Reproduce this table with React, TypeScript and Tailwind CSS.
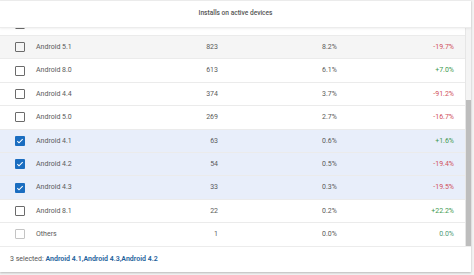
import React from "react";

type Row = { name: string; installs: string; pct: string; change: string; tone: "red" | "green" | "gray"; checked?: boolean; hover?: boolean; disabled?: boolean; hidden?: boolean };

const rows: Row[] = [
  { name: "", installs: "", pct: "", change: "", tone: "red", hidden: true },
  { name: "Android 5.1", installs: "823", pct: "8.2%", change: "-19.7%", tone: "red", hover: true },
  { name: "Android 8.0", installs: "613", pct: "6.1%", change: "+7.0%", tone: "green" },
  { name: "Android 4.4", installs: "374", pct: "3.7%", change: "-91.2%", tone: "red" },
  { name: "Android 5.0", installs: "269", pct: "2.7%", change: "-16.7%", tone: "red" },
  { name: "Android 4.1", installs: "63", pct: "0.6%", change: "+1.6%", tone: "green", checked: true },
  { name: "Android 4.2", installs: "54", pct: "0.5%", change: "-19.4%", tone: "red", checked: true },
  { name: "Android 4.3", installs: "33", pct: "0.3%", change: "-19.5%", tone: "red", checked: true },
  { name: "Android 8.1", installs: "22", pct: "0.2%", change: "+22.2%", tone: "green" },
  { name: "Others", installs: "1", pct: "0.0%", change: "0.0%", tone: "gray", disabled: true },
];

function Box({ checked, disabled }: { checked?: boolean; disabled?: boolean }) {
  if (checked) {
    return (
      <div className="w-[10px] h-[10px] rounded-[1px] bg-[#1a6dc0] flex items-center justify-center">
        <svg width="8" height="8" viewBox="0 0 24 24">
          <path d="M4 12.5l5 5L20 6.5" fill="none" stroke="white" strokeWidth="3.2" />
        </svg>
      </div>
    );
  }
  return (
    <div
      className={
        "w-[10px] h-[10px] rounded-[1px] border-[1.5px] " +
        (disabled ? "border-[#c4c4c4]" : "border-[#6b6b6b]")
      }
    />
  );
}

export default function App() {
  return (
    <div className="w-[474px] h-[275px] bg-[#f3f3f3] overflow-hidden" style={{ fontFamily: "Roboto, 'Liberation Sans', sans-serif" }}>
      <div className="w-[471px] h-[272px] bg-white shadow-[0_1px_2px_rgba(0,0,0,0.25)] flex flex-col border-t border-[#ececec]">
        <div className="h-[27px] shrink-0 flex items-center justify-center border-b border-[#ececec] shadow-[0_1px_2px_rgba(0,0,0,0.06)] relative z-10">
          <span className="text-[6.6px] font-medium text-[#555]">Installs on active devices</span>
        </div>
        <div className="h-[218px] shrink-0 flex overflow-hidden">
          <div className="flex-1 overflow-hidden">
            {rows.map((r, i) => (
              <div
                key={i}
                className={
                  "h-[23.4px] flex items-center border-b border-[#ebebeb] text-[7px] text-[#5a5a5a] " +
                  (i === 0 ? "-mt-[15.4px] " : "") +
                  (r.checked ? "bg-[#e8eefa]" : r.hover ? "bg-[#f5f5f5]" : "bg-white")
                }
              >
                <div className="w-[36px] shrink-0 pl-[15px]">
                  <Box checked={r.checked} disabled={r.disabled} />
                </div>
                {!r.hidden && (
                  <>
                    <div className="w-[120px] shrink-0">{r.name}</div>
                    <div className="w-[62px] shrink-0 text-right">{r.installs}</div>
                    <div className="w-[104px] shrink-0" />
                    <div className="w-[60px] shrink-0">{r.pct}</div>
                    <div
                      className={
                        "w-[72px] shrink-0 text-right " +
                        (r.tone === "red" ? "text-[#d0505c]" : r.tone === "green" ? "text-[#3f9a52]" : "text-[#4f9a76]")
                      }
                    >
                      {r.change}
                    </div>
                  </>
                )}
              </div>
            ))}
          </div>
          <div className="w-[6px] shrink-0 bg-[#f4f4f4] border-l border-[#e6e6e6] flex flex-col">
            <div className="h-[72px] shrink-0" />
            <div className="flex-1 bg-[#bdbdbd]" />
          </div>
        </div>
        <div className="flex-1 flex items-center pl-[10px] text-[7px] text-[#555] border-t border-[#ececec]">
          <span>3 selected:&nbsp;</span>
          <span className="font-semibold text-[#22609a]">Android 4.1,Android 4.3,Android 4.2</span>
        </div>
      </div>
    </div>
  );
}
